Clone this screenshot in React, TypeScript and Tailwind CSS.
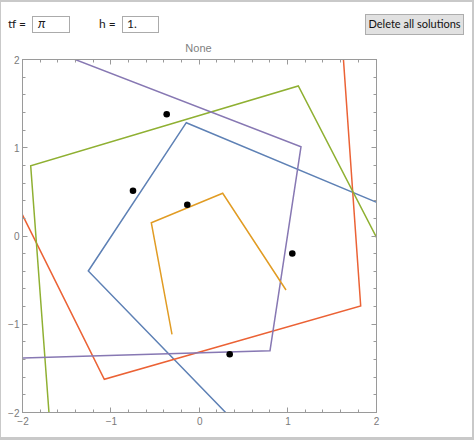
import React from "react";

const X = (v: number) => 23 + (v + 2) * 88.375;
const Y = (v: number) => 60 + (2 - v) * 88.25;

const lines: { c: string; p: string }[] = [
  { c: "#5E81B5", p: "380,203.7 186.3,122.7 88.3,271 230,417" },
  { c: "#EB6235", p: "343.2,56 360.7,306 104.3,379.3 20,210" },
  { c: "#8FB032", p: "49.3,417 30.7,165.7 298.3,86 380,244.3" },
  { c: "#8778B3", p: "66,56 301,146.7 270,350.7 18,358.2" },
  { c: "#E19C24", p: "172,334.3 151.3,222.7 222.7,193.3 286,290" },
];

const dots: [number, number][] = [
  [166.7, 114.3],
  [133, 190.7],
  [187.3, 204.7],
  [292.3, 253.5],
  [229.7, 354.3],
];

function Chart() {
  const ticks: React.ReactNode[] = [];
  for (let i = 0; i <= 20; i++) {
    const v = -2 + i * 0.2;
    const len = i % 5 === 0 ? 5 : 3;
    const x = Math.round(X(v)) + 0.5 - 1;
    const y = Math.round(Y(v)) + 0.5 - 1;
    ticks.push(
      <line key={`b${i}`} x1={x} y1={412.5} x2={x} y2={412.5 - len} />,
      <line key={`t${i}`} x1={x} y1={59.5} x2={x} y2={59.5 + len} />,
      <line key={`l${i}`} x1={22.5} y1={y} x2={22.5 + len} y2={y} />,
      <line key={`r${i}`} x1={376.5} y1={y} x2={376.5 - len} y2={y} />
    );
  }
  const labels = [-2, -1, 0, 1, 2];
  const fmt = (v: number) => (v < 0 ? `\u2212${-v}` : `${v}`);
  return (
    <svg width={471} height={399} viewBox="1 38 471 399" className="block">
      <defs>
        <clipPath id="plotclip">
          <rect x={23} y={60} width={353.5} height={352.5} />
        </clipPath>
      </defs>
      <text
        x={198.5}
        y={52}
        textAnchor="middle"
        fontSize={11}
        fill="#808080"
        fontFamily="'Liberation Sans', Arial, sans-serif"
      >
        None
      </text>
      <g clipPath="url(#plotclip)" fill="none" strokeWidth={1.5} strokeLinejoin="miter">
        {lines.map((l, i) => (
          <polyline key={i} points={l.p} stroke={l.c} />
        ))}
      </g>
      <g fill="#000">
        {dots.map(([x, y], i) => (
          <circle key={i} cx={x} cy={y} r={3.3} />
        ))}
      </g>
      <g stroke="#9a9a9a" strokeWidth={1} fill="none">
        <rect x={22.5} y={59.5} width={354} height={353} />
        {ticks}
      </g>
      <g
        fontSize={10}
        fill="#7a7a7a"
        fontFamily="'Liberation Sans', Arial, sans-serif"
      >
        {labels.map((v) => (
          <text key={`y${v}`} x={19.5} y={Y(v) + 3.5} textAnchor="end">
            {fmt(v)}
          </text>
        ))}
        {labels.map((v) => (
          <text key={`x${v}`} x={X(v)} y={425} textAnchor="middle">
            {fmt(v)}
          </text>
        ))}
      </g>
    </svg>
  );
}

export default function App() {
  return (
    <div
      className="w-[474px] h-[440px] bg-[#c9c9c9] pt-[2px] pl-[1px] pr-[2px] pb-[3px] flex flex-col"
      style={{ fontFamily: "Lato, 'Liberation Sans', Arial, sans-serif" }}
    >
      <div className="flex-1 bg-white flex flex-col">
        <div className="flex items-center pt-[11px] pb-[3px] pl-[7px]">
          <div className="h-[22px] flex items-center w-full text-[12px] text-[#1a1a1a]">
            <span className="w-[24px] whitespace-nowrap">tf =</span>
            <div className="w-[38px] h-[17px] border border-[#ababab] bg-white flex items-center pl-[5px] italic text-[13px]">
              π
            </div>
            <span className="ml-[29px] w-[23px] whitespace-nowrap">h =</span>
            <div className="w-[37px] h-[17px] border border-[#ababab] bg-white flex items-center pl-[4px]">
              1.
            </div>
            <button className="ml-auto mr-[8px] w-[99px] h-[21px] bg-[#e1e1e1] border border-[#adadad] text-[11px] text-[#111] flex items-center justify-center whitespace-nowrap">
              Delete all solutions
            </button>
          </div>
        </div>
        <Chart />
      </div>
    </div>
  );
}
